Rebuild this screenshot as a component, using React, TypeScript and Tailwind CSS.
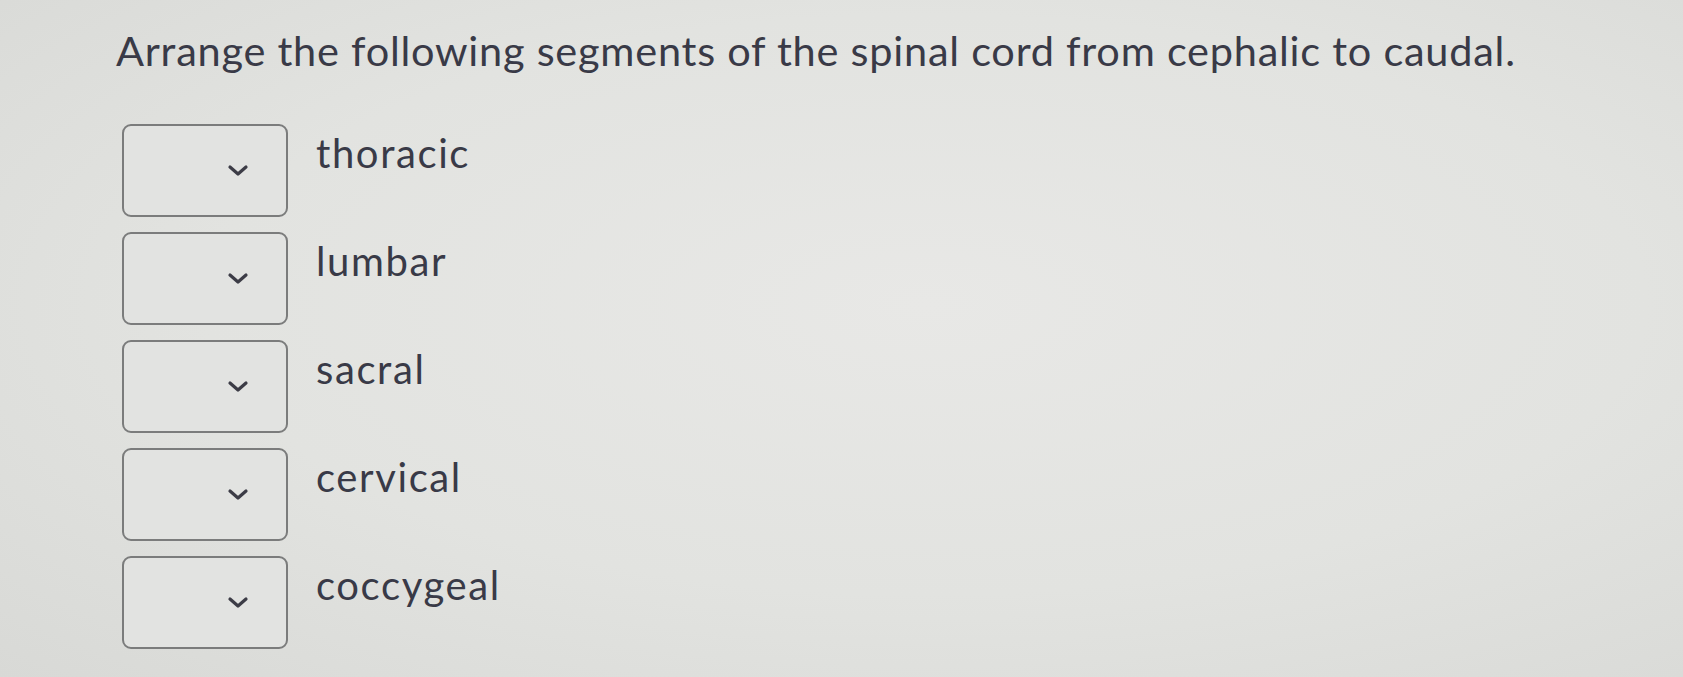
import React from "react";

const segments = ["thoracic", "lumbar", "sacral", "cervical", "coccygeal"];

function Chevron() {
  return (
    <svg width="24" height="15" viewBox="0 0 24 15" fill="none" aria-hidden="true">
      <path
        d="M4 4 L12 11 L20 4"
        stroke="#3c3c46"
        strokeWidth="3.2"
        strokeLinecap="round"
        strokeLinejoin="round"
      />
    </svg>
  );
}

function OrderSelect() {
  return (
    <div className="flex h-[93px] w-[166px] shrink-0 items-center justify-end rounded-[9px] border-2 border-[#7b7c7c] bg-[#e2e3e1] pr-[36px]">
      <Chevron />
    </div>
  );
}

export default function App() {
  return (
    <div
      className="h-[677px] w-[1683px] overflow-hidden bg-[radial-gradient(ellipse_at_55%_45%,#e8e8e6_0%,#e2e3e0_55%,#d8d9d6_100%)] text-[#393a47]"
      style={{ fontFamily: "Lato, 'Open Sans', sans-serif" }}
    >
      <h1 className="pl-[116px] pt-[25px] text-[41.5px] leading-[50px] font-normal tracking-[0.75px]">
        Arrange the following segments of the spinal cord from cephalic to caudal.
      </h1>
      <div className="mt-[49px] flex flex-col gap-[15px] pl-[122px]">
        {segments.map((s) => (
          <div key={s} className="flex items-start gap-[28px]">
            <OrderSelect />
            <span className="pt-[5px] text-[40px] leading-[48px] tracking-[1.6px]">{s}</span>
          </div>
        ))}
      </div>
    </div>
  );
}
